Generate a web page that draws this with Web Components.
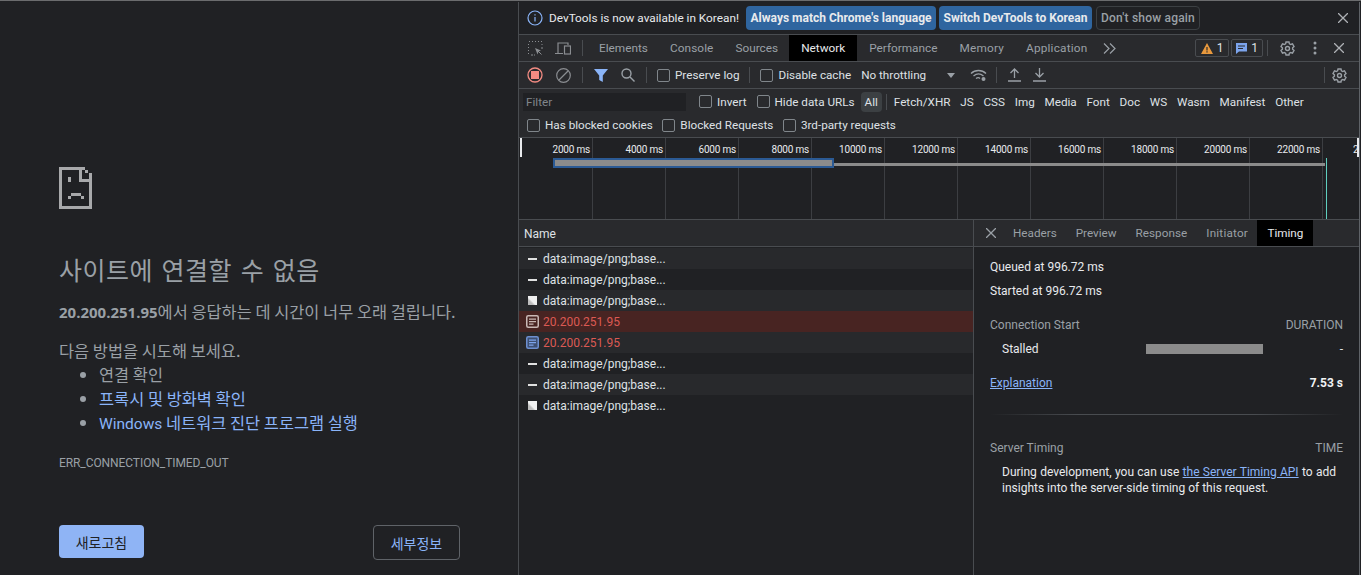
<!DOCTYPE html>
<html lang="en">
<head>
<meta charset="utf-8">
<title>DevTools</title>
<style>
  html, body { margin: 0; height: 100%; background: #202124; overflow: hidden; }
  body { font-family: Roboto, "Noto Sans CJK KR", sans-serif; }
</style>
</head>
<body>
<app-window></app-window>
<script>
const UI_FONT = 'Roboto, "Noto Sans CJK KR", sans-serif';

// small helper: each element gets an open shadow root from a string
class Base extends HTMLElement {
    constructor() {
        super();
        this.attachShadow({ mode: "open" });
        this.shadowRoot.innerHTML = this.render();
    }
    render() { return ""; }
}

class UiCheck extends Base {
    render() {
        return `<style>
            :host { display: inline-flex; align-items: center; gap: 5px; font-size: 11.7px; color: #dfe1e5; white-space: nowrap; }
            i { width: 11px; height: 11px; border: 1px solid #80868b; border-radius: 2px; display: block; }
        </style><i></i><slot></slot>`;
    }
}
customElements.define("ui-check", UiCheck);

class UiTab extends Base {
    render() {
        return `<style>
            :host { display: flex; align-items: center; height: 100%; padding: 0 11px; font-size: 11.8px; color: #9aa0a6; white-space: nowrap; }
            :host([active]) { background: #000; color: #e8eaed; }
        </style><slot></slot>`;
    }
}
customElements.define("ui-tab", UiTab);

class ErrorPage extends Base {
    render() {
        return `<style>
            :host { display: block; box-sizing: border-box; width: 518px; padding: 165px 0 0 59px; color: #9aa0a6; font-family: "Noto Sans CJK KR", sans-serif; flex: none; }
            svg { display: block; }
            h1 { margin: 43px 0 0; font-size: 25px; font-weight: 400; line-height: 34px; letter-spacing: .5px; word-spacing: 2.5px; color: #9aa0a6; }
            p { margin: 0; font-size: 16.4px; line-height: 24px; }
            .why { margin-top: 13px; }
            .why b { font-family: "Open Sans", sans-serif; font-weight: 700; font-size: 15px; }
            .try { margin-top: 14px; }
            ul { margin: 0; padding: 0 0 0 40px; font-size: 16.4px; line-height: 24px; }
            li::marker { color: #9aa0a6; }
            a { color: #8ab4f8; text-decoration: none; }
            .win { font: 15.5px Roboto, sans-serif; }
            .code { margin-top: 21px; font-size: 12px; letter-spacing: -.08px; line-height: 16px; font-family: Roboto, sans-serif; }
            .btns { display: flex; justify-content: space-between; align-items: flex-start; width: 401px; margin-top: 54px; }
            button { box-sizing: border-box; font: 14px "Noto Sans CJK KR", sans-serif; border-radius: 4px; padding: 0; }
            .reload { width: 85px; height: 33px; border: 0; color: #202124; background: #8fb4f5; }
            .more { width: 87px; height: 35px; background: transparent; border: 1px solid #5f6368; color: #8ab4f8; }
        </style>
        <svg width="33" height="42" viewBox="0 0 33 42" shape-rendering="crispEdges" fill="#a8a9ab">
            <path fill-rule="evenodd" d="M0 0H26V3H29V6H33V42H0ZM3 3V39H30V15H20V3ZM23 3V12H30V6H26V3Z"/>
            <path d="M9 10h3v5H9zM12 26h10v3H12zM9 29h3v3H9zM22 29h3v3h-3z"/>
        </svg>
        <h1>사이트에 연결할 수 없음</h1>
        <p class="why"><b>20.200.251.95</b>에서 응답하는 데 시간이 너무 오래 걸립니다.</p>
        <p class="try">다음 방법을 시도해 보세요.</p>
        <ul>
            <li>연결 확인</li>
            <li><a>프록시 및 방화벽 확인</a></li>
            <li><a><span class="win">Windows</span> 네트워크 진단 프로그램 실행</a></li>
        </ul>
        <div class="code">ERR_CONNECTION_TIMED_OUT</div>
        <div class="btns"><button class="reload">새로고침</button><button class="more">세부정보</button></div>`;
    }
}
customElements.define("error-page", ErrorPage);

class DtInfobar extends Base {
    render() {
        return `<style>
            :host { display: flex; align-items: center; height: 33px; flex: none; box-sizing: border-box; background: #202124; border-bottom: 1px solid #494c50; font-size: 11.8px; color: #e8eaed; padding-left: 8px; }
            svg { flex: none; }
            span { margin-left: 6px; white-space: nowrap; width: 197px; }
            button { font: 500 12px ${UI_FONT}; height: 24px; border-radius: 4px; box-sizing: border-box; padding: 0; white-space: nowrap; }
            .p { background: #2f659f; color: #e8eaed; border: 0; font-weight: 700; }
            .a { width: 190px; }
            .b { width: 153px; margin-left: 3px; margin-right: 4px; }
            .g { width: 104px; background: transparent; border: 1px solid #3c4043; color: #9aa0a6; letter-spacing: .2px; }
            .x { margin-left: auto; margin-right: 11px; }
        </style>
        <svg width="16" height="16" viewBox="0 0 16 16" fill="none" stroke="#8ab4f8" stroke-width="1.2"><circle cx="8" cy="8" r="7"/><path d="M8 7v4.5M8 4.2v1.2"/></svg>
        <span>DevTools is now available in Korean!</span>
        <button class="p a">Always match Chrome's language</button>
        <button class="p b">Switch DevTools to Korean</button>
        <button class="g">Don't show again</button>
        <svg class="x" width="10" height="10" viewBox="0 0 10 10" stroke="#aeb1b5" stroke-width="1.3"><path d="M0 0l10 10M10 0L0 10"/></svg>`;
    }
}
customElements.define("dt-infobar", DtInfobar);

class DtGear extends Base {
    render() {
        return `<style>:host { display: block; width: 15px; height: 15px; } svg { display: block; }</style>
        <svg width="15" height="15" viewBox="0 0 15 15" fill="none" stroke="#9aa0a6" stroke-width="1.4"><path d="M6 1h3l.4 1.8 1.3.7 1.8-.6 1.5 2.6-1.4 1.2v1.6l1.4 1.2-1.5 2.6-1.8-.6-1.3.7L9 14H6l-.4-1.8-1.3-.7-1.8.6L1 9.5l1.4-1.2V6.7L1 5.5l1.5-2.6 1.8.6 1.3-.7z"/><circle cx="7.5" cy="7.5" r="2"/></svg>`;
    }
}
customElements.define("dt-gear", DtGear);

class DtTabbar extends Base {
    render() {
        return `<style>
            :host { display: flex; align-items: stretch; height: 27px; flex: none; box-sizing: border-box; background: #292a2d; border-bottom: 1px solid #494c50; }
            .ic { display: flex; align-items: center; gap: 12px; padding-left: 9px; width: 63px; box-sizing: border-box; flex: none; }
            .sep { width: 1px; height: 16px; background: #494c50; margin-top: 5px; flex: none; }
            .tabs { display: flex; margin-left: 5px; }
            .more { align-self: center; margin-left: 5px; }
            .end { margin-left: auto; display: flex; align-items: center; padding-right: 15px; }
            .cnt { display: flex; align-items: center; justify-content: center; gap: 4px; box-sizing: border-box; height: 18px; width: 34px; border: 1px solid #494c50; border-radius: 2px; font-size: 12px; color: #dfe1e5; margin-right: 2px; }
            .cnt.m { width: 32px; margin-right: 0; }
            .bar { width: 1px; height: 16px; background: #494c50; margin: 0 12px 0 4px; }
        </style>
        <div class="ic">
            <svg width="15" height="15" viewBox="0 0 15 15" fill="none" stroke="#8a8d91"><path d="M1 .5h1M4 .5h1M7 .5h1M10 .5h1M13 .5h1M.5 3v1M.5 6v1M.5 9v1M.5 12v1M14 3v1M14 6v2M3 14h2M6 14h1"/><path d="M7 7l6 2.5-2.5 1-1 3z" fill="#8a8d91" stroke="none"/><path d="M10 10l3.5 3.5"/></svg>
            <svg width="16" height="13" viewBox="0 0 16 13" fill="none" stroke="#8a8d91" stroke-width="1.2"><path d="M3 10V1h10v2M0 11.5h8"/><rect x="9.5" y="4" width="6" height="8"/><path d="M3 10v1"/></svg>
        </div>
        <div class="sep"></div>
        <div class="tabs">
            <ui-tab>Elements</ui-tab><ui-tab style="letter-spacing:.1px">Console</ui-tab><ui-tab>Sources</ui-tab><ui-tab active style="padding:0 12px">Network</ui-tab><ui-tab style="padding-left:12px">Performance</ui-tab><ui-tab style="letter-spacing:.2px">Memory</ui-tab><ui-tab style="letter-spacing:.2px">Application</ui-tab>
        </div>
        <svg class="more" width="13" height="11" viewBox="0 0 13 11" fill="none" stroke="#9aa0a6" stroke-width="1.2"><path d="M1 .5l5 5-5 5M7 .5l5 5-5 5"/></svg>
        <div class="end">
            <div class="cnt"><svg width="12" height="11" viewBox="0 0 12 11"><path d="M6 0l6 11H0z" fill="#e8993d"/><path d="M5.4 4h1.2v3.5H5.4zM5.4 8.2h1.2v1.2H5.4z" fill="#292a2d"/></svg>1</div>
            <div class="cnt m"><svg width="11" height="11" viewBox="0 0 11 11"><path d="M0 0h11v8.5H3L0 11z" fill="#7ca4ec"/><path d="M2 2.5h7v1H2zM2 5h5v1H2z" fill="#292a2d"/></svg>1</div>
            <div class="bar"></div>
            <dt-gear></dt-gear>
            <svg style="margin-left:18px" width="4" height="14" viewBox="0 0 4 14" fill="#9aa0a6"><circle cx="2" cy="2" r="1.5"/><circle cx="2" cy="7" r="1.5"/><circle cx="2" cy="12" r="1.5"/></svg>
            <svg style="margin-left:17px" width="10" height="10" viewBox="0 0 10 10" stroke="#aeb1b5" stroke-width="1.3"><path d="M0 0l10 10M10 0L0 10"/></svg>
        </div>`;
    }
}
customElements.define("dt-tabbar", DtTabbar);

class DtToolbar extends Base {
    render() {
        return `<style>
            :host { display: flex; align-items: center; height: 27px; flex: none; box-sizing: border-box; background: #292a2d; border-bottom: 1px solid #494c50; padding-left: 8px; font-size: 11.7px; color: #dfe1e5; white-space: nowrap; }
            .sep { width: 1px; height: 16px; background: #494c50; flex: none; }
            .arrow { width: 0; height: 0; border: 4px solid transparent; border-top: 5px solid #9aa0a6; border-bottom: 0; margin-left: 21px; }
        </style>
        <svg width="16" height="16" viewBox="0 0 16 16"><circle cx="8" cy="8" r="7" fill="none" stroke="#f28b82" stroke-width="1.3"/><rect x="4" y="4" width="8" height="8" fill="#f28b82"/></svg>
        <svg style="margin-left:13px" width="15" height="15" viewBox="0 0 15 15" fill="none" stroke="#8a8d91" stroke-width="1.2"><circle cx="7.5" cy="7.5" r="6.8"/><path d="M3 12L12 3"/></svg>
        <div class="sep" style="margin:0 11px"></div>
        <svg width="14" height="13" viewBox="0 0 14 13"><path d="M0 0h14L8.8 6.5V13L5.2 11V6.5z" fill="#8ab4f8"/></svg>
        <svg style="margin-left:13px" width="14" height="14" viewBox="0 0 14 14" fill="none" stroke="#9aa0a6" stroke-width="1.4"><circle cx="5.5" cy="5.5" r="4.5"/><path d="M9 9l4.5 4.5"/></svg>
        <div class="sep" style="margin:0 10px 0 11px"></div>
        <ui-check>Preserve log</ui-check>
        <div class="sep" style="margin:0 10px"></div>
        <ui-check>Disable cache</ui-check>
        <span style="margin-left:10px">No throttling</span>
        <i class="arrow"></i>
        <svg style="margin-left:15px" width="17" height="13" viewBox="0 0 17 13" fill="none" stroke="#9aa0a6" stroke-width="1.3"><path d="M1 4.5C5 .5 12 .5 16 4.5M3.5 7c3-2.5 7-2.5 10 0M6 9.5c1.5-1 3-1 4 0"/><circle cx="13.5" cy="10" r="2" fill="#9aa0a6" stroke="none"/></svg>
        <div class="sep" style="margin:0 11px 0 9px"></div>
        <svg width="13" height="14" viewBox="0 0 13 14" fill="none" stroke="#9aa0a6" stroke-width="1.3"><path d="M6.5 10V1M2.5 5l4-4 4 4M0 13h13"/></svg>
        <svg style="margin-left:12px" width="13" height="14" viewBox="0 0 13 14" fill="none" stroke="#9aa0a6" stroke-width="1.3"><path d="M6.5 0v9M2.5 5l4 4 4-4M0 13h13"/></svg>
        <div class="sep" style="margin-left:auto"></div>
        <dt-gear style="margin:0 12px 0 7px"></dt-gear>`;
    }
}
customElements.define("dt-toolbar", DtToolbar);

class DtFilters extends Base {
    render() {
        return `<style>
            :host { display: block; flex: none; box-sizing: border-box; height: 49px; background: #292a2d; border-bottom: 1px solid #494c50; font-size: 11.7px; color: #dfe1e5; white-space: nowrap; }
            .r1 { display: flex; align-items: center; height: 25px; padding-left: 4px; }
            .r2 { display: flex; align-items: center; height: 22px; padding-left: 8px; gap: 9.6px; }
            .input { width: 163px; height: 18px; background: #202124; color: #80868b; padding-left: 3px; line-height: 18px; box-sizing: border-box; margin-right: 13px; }
            .r1 ui-check + ui-check { margin-left: 10px; }
            .all { background: #3c4043; border-radius: 4px; padding: 2px 4px; margin-left: 6px; height: 16px; line-height: 16px; }
            .sep { width: 1px; height: 16px; background: #494c50; margin: 0 7px 0 4px; }
            .t { margin-right: 9.8px; }
        </style>
        <div class="r1">
            <div class="input">Filter</div>
            <ui-check>Invert</ui-check><ui-check>Hide data URLs</ui-check>
            <span class="all">All</span><div class="sep"></div>
            <span class="t">Fetch/XHR</span><span class="t">JS</span><span class="t">CSS</span><span class="t">Img</span><span class="t">Media</span><span class="t">Font</span><span class="t">Doc</span><span class="t">WS</span><span class="t">Wasm</span><span class="t">Manifest</span><span class="t">Other</span>
        </div>
        <div class="r2"><ui-check>Has blocked cookies</ui-check><ui-check>Blocked Requests</ui-check><ui-check>3rd-party requests</ui-check></div>`;
    }
}
customElements.define("dt-filters", DtFilters);

class DtOverview extends Base {
    render() {
        const labels = [2, 4, 6, 8, 10, 12, 14, 16, 18, 20, 22].map(n => `<div class="c">${n * 1000} ms</div>`).join("");
        return `<style>
            :host { display: block; position: relative; flex: none; height: 81px; background: #202124; overflow: hidden; font-size: 10px; letter-spacing: -.2px; color: #e8eaed; }
            .grid { display: flex; height: 100%; }
            .c { flex: none; width: 73px; box-sizing: border-box; height: 100%; border-right: 1px solid #3c3e42; text-align: right; padding: 6px 2px 0 0; white-space: nowrap; }
            .c:first-child { width: 74px; }
            .last { padding: 6px 0 0 30px; white-space: nowrap; }
            .hl, .hr { position: absolute; top: 0; width: 2px; height: 19px; background: #e8eaed; }
            .hl { left: 1px; } .hr { right: 0; }
            .wait { position: absolute; left: 34px; top: 25px; width: 772px; height: 3px; background: #8b8b8b; }
            .sel { position: absolute; left: 34px; top: 20px; width: 281px; height: 10px; box-sizing: border-box; background: #8b8b8b; border: 2px solid #2b5a94; }
            .load { position: absolute; left: 807px; top: 20px; bottom: 0; width: 1px; background: #5fcfc0; }
        </style>
        <div class="grid">${labels}<div class="last">2</div></div>
        <div class="wait"></div><div class="sel"></div><div class="load"></div>
        <div class="hl"></div><div class="hr"></div>`;
    }
}
customElements.define("dt-overview", DtOverview);

class NetRow extends Base {
    render() {
        const kind = this.getAttribute("kind") || "dash";
        const bars = `M3 3.5h7v1.3H3zM3 6h7v1.3H3zM3 8.5h4.5v1.3H3z`;
        const icons = {
            dash: `<span class="d"></span>`,
            box: `<span class="b"></span>`,
            doc: `<svg width="13" height="13" viewBox="0 0 13 13"><rect x=".75" y=".75" width="11.5" height="11.5" rx="1.5" fill="none" stroke="#c9b8b5" stroke-width="1.5"/><path d="${bars}" fill="#c9b8b5"/></svg>`,
            docb: `<svg width="13" height="13" viewBox="0 0 13 13"><rect x=".75" y=".75" width="11.5" height="11.5" rx="1.5" fill="#3d4f72" stroke="#6d8fd0" stroke-width="1.5"/><path d="${bars}" fill="#7ca4ec"/></svg>`
        };
        return `<style>
            :host { display: flex; align-items: center; height: 21px; font-size: 12px; color: #dfe1e5; background: #202124; padding-left: 7px; white-space: nowrap; }
            :host([alt]) { background: #28292c; }
            :host([err]) { color: #dc5a54; }
            :host([sel]) { background: #482422; }
            .i { width: 17px; display: flex; align-items: center; flex: none; }
            .d { width: 9px; height: 2px; background: #e0e0e0; margin-left: 2px; }
            .b { width: 9px; height: 9px; background: linear-gradient(45deg, #bdbdbd 30%, #f1f1f1 45%); margin-left: 2px; }
        </style><div class="i">${icons[kind]}</div><slot></slot>`;
    }
}
customElements.define("net-row", NetRow);

class DtRequests extends Base {
    render() {
        const png = "data:image/png;base...";
        return `<style>
            :host { display: block; box-sizing: border-box; width: 454px; flex: none; background: #202124; font-size: 12px; color: #dfe1e5; }
            .head { height: 27px; box-sizing: border-box; background: #292a2d; border-bottom: 1px solid #494c50; display: flex; align-items: center; padding: 1px 0 0 5px; }
            .rows { padding-top: 1px; }
        </style>
        <div class="head">Name</div>
        <div class="rows">
            <net-row alt>${png}</net-row>
            <net-row>${png}</net-row>
            <net-row alt kind="box">${png}</net-row>
            <net-row sel err kind="doc">20.200.251.95</net-row>
            <net-row alt err kind="docb">20.200.251.95</net-row>
            <net-row>${png}</net-row>
            <net-row alt>${png}</net-row>
            <net-row kind="box">${png}</net-row>
        </div>`;
    }
}
customElements.define("dt-requests", DtRequests);

class DtTiming extends Base {
    render() {
        return `<style>
            :host { display: block; flex: 1; min-width: 0; border-left: 1px solid #494c50; font-size: 12px; color: #dfe1e5; }
            .tabs { display: flex; align-items: stretch; height: 27px; box-sizing: border-box; background: #292a2d; border-bottom: 1px solid #494c50; }
            .tabs svg { align-self: center; margin: 0 7.5px 0 12px; }
            .tabs ui-tab { padding: 0 9.5px; font-size: 11.7px; }
            .tabs ui-tab[active] { padding: 0 10px; }
            .body { padding: 8px 16px 0 16px; }
            .l { line-height: 24px; color: #e8eaed; }
            .row { display: grid; grid-template-columns: 1fr 117px 80px; align-items: center; line-height: 24px; }
            .h { color: #9aa0a6; }
            .hd { margin-top: 10px; }
            .r { text-align: right; }
            .bar { height: 10px; background: #8b8b8b; }
            .in { padding-left: 12px; color: #e8eaed; }
            a { color: #8ab4f8; text-decoration: underline; }
            .ex { margin-top: 10px; }
            b { color: #f1f3f4; }
            hr { height: 1px; border: 0; margin: 19px 0 21px; background: linear-gradient(90deg, transparent, #494c50 25%, #494c50 75%, transparent); }
            .txt { padding-left: 12px; line-height: 16px; color: #e8eaed; margin-top: 4px; }
            .w { word-spacing: .35px; }
        </style>
        <div class="tabs">
            <svg width="10" height="10" viewBox="0 0 10 10" stroke="#9aa0a6" stroke-width="1.3"><path d="M0 0l10 10M10 0L0 10"/></svg>
            <ui-tab>Headers</ui-tab><ui-tab>Preview</ui-tab><ui-tab style="letter-spacing:.05px">Response</ui-tab><ui-tab style="letter-spacing:.2px">Initiator</ui-tab><ui-tab active>Timing</ui-tab>
        </div>
        <div class="body">
            <div class="l">Queued at 996.72 ms</div>
            <div class="l">Started at 996.72 ms</div>
            <div class="row h hd"><span>Connection Start</span><span></span><span class="r">DURATION</span></div>
            <div class="row"><span class="in">Stalled</span><div class="bar"></div><span class="r">-</span></div>
            <div class="row ex"><a>Explanation</a><span></span><b class="r">7.53 s</b></div>
            <hr>
            <div class="row h"><span>Server Timing</span><span></span><span class="r">TIME</span></div>
            <div class="txt"><span class="w">During development, you can use <a>the Server Timing API</a> to add</span><br>insights into the server-side timing of this request.</div>
        </div>`;
    }
}
customElements.define("dt-timing", DtTiming);

class DtPanel extends Base {
    render() {
        return `<style>
            :host { display: flex; flex-direction: column; flex: 1; min-width: 0; font-family: ${UI_FONT}; background: #202124; }
            .split { display: flex; flex: 1; min-height: 0; border-top: 1px solid #494c50; }
        </style>
        <dt-infobar></dt-infobar>
        <dt-tabbar></dt-tabbar>
        <dt-toolbar></dt-toolbar>
        <dt-filters></dt-filters>
        <dt-overview></dt-overview>
        <div class="split"><dt-requests></dt-requests><dt-timing></dt-timing></div>`;
    }
}
customElements.define("dt-panel", DtPanel);

class AppWindow extends Base {
    render() {
        return `<style>
            :host { display: flex; box-sizing: border-box; height: 575px; width: 1361px; border-top: 1px solid #6b6c6e; padding: 1px 1px 0 0; background: #202124; }
            .line { width: 1px; background: #494c50; flex: none; }
        </style>
        <error-page></error-page><div class="line"></div><dt-panel></dt-panel><div class="line" style="background:#5f6368"></div>`;
    }
}
customElements.define("app-window", AppWindow);
</script>
</body>
</html>
